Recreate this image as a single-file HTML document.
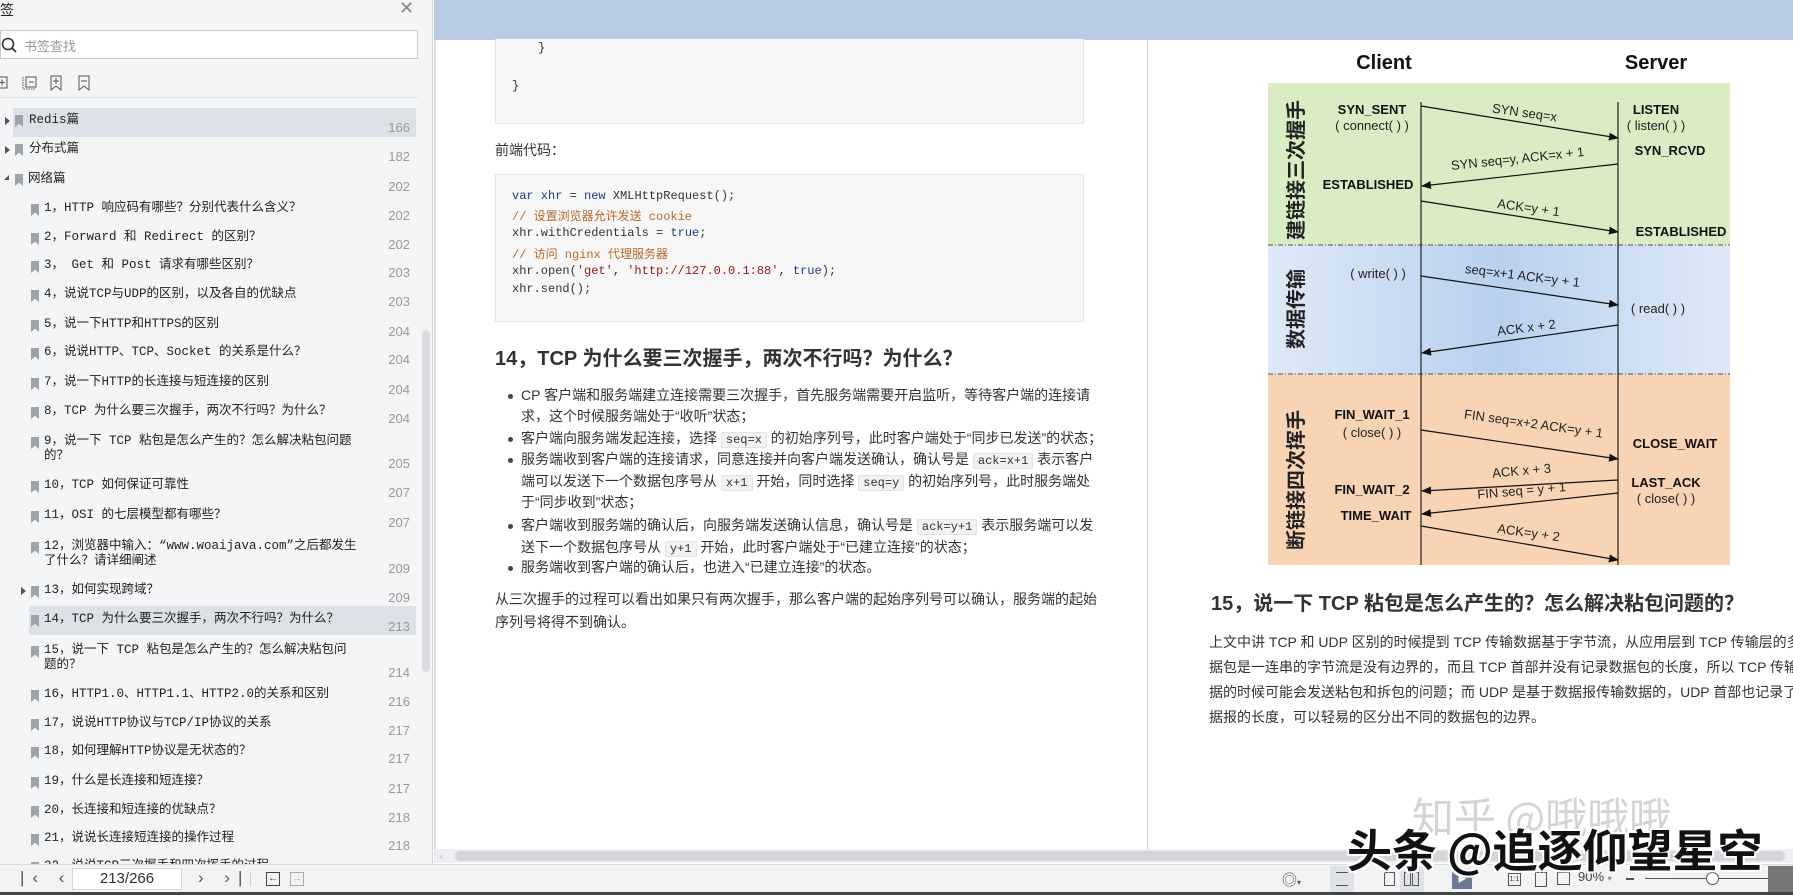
<!DOCTYPE html>
<html><head><meta charset="utf-8"><style>
*{margin:0;padding:0;box-sizing:border-box}
body{width:1793px;height:895px;overflow:hidden;position:relative;background:#fff;font-family:"Liberation Sans","Noto Sans CJK SC",sans-serif;color:#333}
.a{position:absolute;white-space:nowrap}
#side{position:absolute;left:0;top:0;width:433px;height:864px;background:#f4f5f7;border-right:1px solid #d6d8dc}
.it{position:absolute;font-family:"Liberation Mono","Noto Sans CJK SC",monospace;font-size:12.5px;color:#222;line-height:15px;white-space:nowrap}
.pg{position:absolute;left:380px;font-size:13px;color:#9a9a9a;width:30px;text-align:right}
.bm{position:absolute;width:8px;height:12px;background:#9ea3aa;clip-path:polygon(0 0,100% 0,100% 100%,50% 72%,0 100%)}
.tri{position:absolute;width:0;height:0;border-left:5px solid #555;border-top:4px solid transparent;border-bottom:4px solid transparent}
.code{position:absolute;background:#f7f7f7;border:1px solid #e6e6e6;font-family:"Liberation Mono","Noto Sans CJK SC",monospace;font-size:12px;color:#333}
.cl{position:absolute;left:16px;white-space:nowrap}
.kw{color:#1e3a8a}.cm{color:#b7692b}.st{color:#a31515}
.p{font-size:14px;color:#333;line-height:21px}
.ic{background:#f2f2f2;border:1px solid #e2e2e2;font-family:"Liberation Mono",monospace;font-size:12px;padding:0 4px;border-radius:2px}
.li{position:absolute;left:521px;font-size:14px;white-space:nowrap}
.dot{position:absolute;left:508px;width:5px;height:5px;border-radius:50%;background:#444}
</style></head><body>

<div id="side">
  <div class="a" style="left:0;top:0;font-size:14px;color:#222">签</div>
  <div class="a" style="left:399px;top:-2px;font-size:18px;color:#888">✕</div>
  <div class="a" style="left:0;top:30px;width:418px;height:29px;background:#fff;border:1px solid #c9cbd0"></div>
  <svg class="a" style="left:1px;top:37px" width="16" height="16"><circle cx="7" cy="7" r="5.5" fill="none" stroke="#333" stroke-width="1.6"/><line x1="11" y1="11" x2="15" y2="15" stroke="#333" stroke-width="1.8"/></svg>
  <div class="a" style="left:24px;top:36px;font-size:13px;color:#999">书签查找</div>
  <svg class="a" style="left:0;top:74px" width="100" height="18" fill="none" stroke="#555" stroke-width="1">
    <rect x="-4" y="3" width="11" height="11"/><line x1="-1" y1="8.5" x2="5" y2="8.5"/><line x1="2" y1="5.5" x2="2" y2="11.5"/>
    <rect x="26" y="3" width="10" height="10"/><line x1="29" y1="8" x2="34" y2="8"/><path d="M23 3v12h12" stroke-dasharray="1.5 1"/>
    <path d="M51 2h10v14l-5-4-5 4z"/><line x1="53" y1="7" x2="59" y2="7"/><line x1="56" y1="4" x2="56" y2="10"/>
    <path d="M79 2h10v14l-5-4-5 4z"/><line x1="81" y1="7" x2="87" y2="7"/>
  </svg>
  <div class="a" style="left:0;top:97px;width:418px;height:1px;background:#e0e2e6"></div>
  <div class="a" style="left:13px;top:108px;width:403px;height:29px;background:#dde0e6"></div>
  <div class="a" style="left:29px;top:606px;width:387px;height:29px;background:#dde0e6"></div>
  <div class="a" style="left:422px;top:330px;width:8px;height:342px;background:#dadce0;border-radius:4px"></div>

  <div class="tri" style="left:5px;top:117px"></div><div class="bm" style="left:15px;top:115px"></div><div class="it" style="left:29px;top:113px">Redis篇</div><div class="pg" style="top:120px">166</div>
  <div class="tri" style="left:5px;top:146px"></div><div class="bm" style="left:15px;top:144px"></div><div class="it" style="left:29px;top:142px">分布式篇</div><div class="pg" style="top:149px">182</div>
  <div class="a" style="left:4px;top:175px;width:0;height:0;border-right:5px solid #555;border-top:5px solid transparent"></div><div class="bm" style="left:15px;top:174px"></div><div class="it" style="left:28px;top:172px">网络篇</div><div class="pg" style="top:179px">202</div>

  <div class="bm" style="left:31px;top:204px"></div><div class="it" style="left:44px;top:201px">1，HTTP 响应码有哪些？分别代表什么含义？</div><div class="pg" style="top:208px">202</div>
  <div class="bm" style="left:31px;top:233px"></div><div class="it" style="left:44px;top:230px">2，Forward 和 Redirect 的区别？</div><div class="pg" style="top:237px">202</div>
  <div class="bm" style="left:31px;top:261px"></div><div class="it" style="left:44px;top:258px">3， Get 和 Post 请求有哪些区别？</div><div class="pg" style="top:265px">203</div>
  <div class="bm" style="left:31px;top:290px"></div><div class="it" style="left:44px;top:287px">4，说说TCP与UDP的区别，以及各自的优缺点</div><div class="pg" style="top:294px">203</div>
  <div class="bm" style="left:31px;top:320px"></div><div class="it" style="left:44px;top:317px">5，说一下HTTP和HTTPS的区别</div><div class="pg" style="top:324px">204</div>
  <div class="bm" style="left:31px;top:348px"></div><div class="it" style="left:44px;top:345px">6，说说HTTP、TCP、Socket 的关系是什么？</div><div class="pg" style="top:352px">204</div>
  <div class="bm" style="left:31px;top:378px"></div><div class="it" style="left:44px;top:375px">7，说一下HTTP的长连接与短连接的区别</div><div class="pg" style="top:382px">204</div>
  <div class="bm" style="left:31px;top:407px"></div><div class="it" style="left:44px;top:404px">8，TCP 为什么要三次握手，两次不行吗？为什么？</div><div class="pg" style="top:411px">204</div>
  <div class="bm" style="left:31px;top:437px"></div><div class="it" style="left:44px;top:434px">9，说一下 TCP 粘包是怎么产生的？怎么解决粘包问题<br>的？</div><div class="pg" style="top:456px">205</div>
  <div class="bm" style="left:31px;top:481px"></div><div class="it" style="left:44px;top:478px">10，TCP 如何保证可靠性</div><div class="pg" style="top:485px">207</div>
  <div class="bm" style="left:31px;top:511px"></div><div class="it" style="left:44px;top:508px">11，OSI 的七层模型都有哪些？</div><div class="pg" style="top:515px">207</div>
  <div class="bm" style="left:31px;top:542px"></div><div class="it" style="left:44px;top:539px">12，浏览器中输入：“www.woaijava.com”之后都发生<br>了什么？请详细阐述</div><div class="pg" style="top:561px">209</div>
  <div class="tri" style="left:21px;top:587px"></div><div class="bm" style="left:31px;top:586px"></div><div class="it" style="left:44px;top:583px">13，如何实现跨域？</div><div class="pg" style="top:590px">209</div>
  <div class="bm" style="left:31px;top:615px"></div><div class="it" style="left:44px;top:612px">14，TCP 为什么要三次握手，两次不行吗？为什么？</div><div class="pg" style="top:619px">213</div>
  <div class="bm" style="left:31px;top:646px"></div><div class="it" style="left:44px;top:643px">15，说一下 TCP 粘包是怎么产生的？怎么解决粘包问<br>题的？</div><div class="pg" style="top:665px">214</div>
  <div class="bm" style="left:31px;top:690px"></div><div class="it" style="left:44px;top:687px">16，HTTP1.0、HTTP1.1、HTTP2.0的关系和区别</div><div class="pg" style="top:694px">216</div>
  <div class="bm" style="left:31px;top:719px"></div><div class="it" style="left:44px;top:716px">17，说说HTTP协议与TCP/IP协议的关系</div><div class="pg" style="top:723px">217</div>
  <div class="bm" style="left:31px;top:747px"></div><div class="it" style="left:44px;top:744px">18，如何理解HTTP协议是无状态的？</div><div class="pg" style="top:751px">217</div>
  <div class="bm" style="left:31px;top:777px"></div><div class="it" style="left:44px;top:774px">19，什么是长连接和短连接？</div><div class="pg" style="top:781px">217</div>
  <div class="bm" style="left:31px;top:806px"></div><div class="it" style="left:44px;top:803px">20，长连接和短连接的优缺点？</div><div class="pg" style="top:810px">218</div>
  <div class="bm" style="left:31px;top:834px"></div><div class="it" style="left:44px;top:831px">21，说说长连接短连接的操作过程</div><div class="pg" style="top:838px">218</div>
  <div class="bm" style="left:31px;top:862px"></div><div class="it" style="left:44px;top:859px">22，说说TCP三次握手和四次挥手的过程</div>
</div>

<div class="a" style="left:434px;top:0;width:1359px;height:40px;background:#b8cce4"></div>
<div class="a" style="left:434px;top:40px;width:2px;height:810px;background:#e2e2e2"></div>
<div class="a" style="left:1147px;top:40px;width:1px;height:810px;background:#cfcfcf"></div>

<div class="code" style="left:495px;top:39px;width:589px;height:85px;border-top:none">
  <div class="cl" style="left:42px;top:2px">}</div>
  <div class="cl" style="left:16px;top:40px">}</div>
</div>
<div class="a p" style="left:495px;top:140px">前端代码：</div>
<div class="code" style="left:495px;top:174px;width:589px;height:148px">
  <div class="cl" style="top:14px"><span class="kw">var xhr</span> = <span class="kw">new</span> XMLHttpRequest();</div>
  <div class="cl" style="top:32px" ><span class="cm">// 设置浏览器允许发送 cookie</span></div>
  <div class="cl" style="top:51px">xhr.withCredentials = <span class="kw">true</span>;</div>
  <div class="cl" style="top:70px"><span class="cm">// 访问 nginx 代理服务器</span></div>
  <div class="cl" style="top:89px">xhr.open(<span class="st">'get'</span>, <span class="st">'http://127.0.0.1:88'</span>, <span class="kw">true</span>);</div>
  <div class="cl" style="top:107px">xhr.send();</div>
</div>
<div class="a" style="left:495px;top:342px;font-size:20px;font-weight:bold;color:#333">14，TCP 为什么要三次握手，两次不行吗？为什么？</div>

<div class="dot" style="top:394px"></div><div class="li" style="top:385px">CP 客户端和服务端建立连接需要三次握手，首先服务端需要开启监听，等待客户端的连接请</div>
<div class="li" style="top:406px">求，这个时候服务端处于“收听”状态；</div>
<div class="dot" style="top:437px"></div><div class="li" style="top:428px">客户端向服务端发起连接，选择 <span class="ic">seq=x</span> 的初始序列号，此时客户端处于“同步已发送”的状态；</div>
<div class="dot" style="top:458px"></div><div class="li" style="top:449px">服务端收到客户端的连接请求，同意连接并向客户端发送确认，确认号是 <span class="ic">ack=x+1</span> 表示客户</div>
<div class="li" style="top:471px">端可以发送下一个数据包序号从 <span class="ic">x+1</span> 开始，同时选择 <span class="ic">seq=y</span> 的初始序列号，此时服务端处</div>
<div class="li" style="top:492px">于“同步收到”状态；</div>
<div class="dot" style="top:524px"></div><div class="li" style="top:515px">客户端收到服务端的确认后，向服务端发送确认信息，确认号是 <span class="ic">ack=y+1</span> 表示服务端可以发</div>
<div class="li" style="top:537px">送下一个数据包序号从 <span class="ic">y+1</span> 开始，此时客户端处于“已建立连接”的状态；</div>
<div class="dot" style="top:566px"></div><div class="li" style="top:557px">服务端收到客户端的确认后，也进入“已建立连接”的状态。</div>
<div class="a p" style="left:495px;top:589px">从三次握手的过程可以看出如果只有两次握手，那么客户端的起始序列号可以确认，服务端的起始</div>
<div class="a p" style="left:495px;top:612px">序列号将得不到确认。</div>

<svg class="a" style="left:0;top:0" width="1793" height="895" font-family="Liberation Sans, sans-serif">
  <defs>
    <marker id="ar" markerWidth="10" markerHeight="8" refX="9" refY="4" orient="auto" markerUnits="userSpaceOnUse"><path d="M0 0L10 4L0 8z" fill="#111"/></marker>
    <linearGradient id="gb" x1="0" x2="1"><stop offset="0" stop-color="#dfe9f7"/><stop offset=".5" stop-color="#b9d0ef"/><stop offset="1" stop-color="#dfe9f7"/></linearGradient>
  </defs>
  <rect x="1268" y="83" width="462" height="162" fill="#d9ecc4"/>
  <rect x="1268" y="245" width="462" height="129" fill="url(#gb)"/>
  <rect x="1268" y="374" width="462" height="191" fill="#f9d4b4"/>
  <line x1="1268" y1="245" x2="1730" y2="245" stroke="#555" stroke-dasharray="5 2 1 2"/>
  <line x1="1268" y1="374" x2="1730" y2="374" stroke="#555" stroke-dasharray="5 2 1 2"/>
  <line x1="1421" y1="102" x2="1421" y2="565" stroke="#222" stroke-width="1.2"/>
  <line x1="1618" y1="102" x2="1618" y2="565" stroke="#222" stroke-width="1.2"/>
  <g font-weight="bold" font-size="20" text-anchor="middle" fill="#111"><text x="1384" y="69">Client</text><text x="1656" y="69">Server</text></g>
  <g font-family="Noto Sans CJK SC, sans-serif" font-weight="bold" font-size="20" fill="#222" text-anchor="middle">
    <text transform="translate(1303,170) rotate(-90)">建链接三次握手</text>
    <text transform="translate(1303,309) rotate(-90)">数据传输</text>
    <text transform="translate(1303,480) rotate(-90)">断链接四次挥手</text>
  </g>
  <g font-weight="bold" font-size="13" fill="#111" text-anchor="middle">
    <text x="1372" y="114">SYN_SENT</text><text x="1656" y="114">LISTEN</text>
    <text x="1670" y="155">SYN_RCVD</text><text x="1368" y="189">ESTABLISHED</text>
    <text x="1681" y="236">ESTABLISHED</text>
    <text x="1372" y="419">FIN_WAIT_1</text><text x="1675" y="448">CLOSE_WAIT</text>
    <text x="1372" y="494">FIN_WAIT_2</text><text x="1666" y="487">LAST_ACK</text>
    <text x="1376" y="520">TIME_WAIT</text>
  </g>
  <g font-size="13" fill="#222" text-anchor="middle">
    <text x="1372" y="130">( connect( ) )</text><text x="1656" y="130">( listen( ) )</text>
    <text x="1378" y="278">( write( ) )</text><text x="1658" y="313">( read( ) )</text>
    <text x="1372" y="437">( close( ) )</text><text x="1666" y="503">( close( ) )</text>
  </g>
  <g stroke="#111" stroke-width="1.2" marker-end="url(#ar)">
    <line x1="1421" y1="106" x2="1618" y2="138"/>
    <line x1="1618" y1="164" x2="1422" y2="186"/>
    <line x1="1421" y1="201" x2="1618" y2="232"/>
    <line x1="1421" y1="276" x2="1618" y2="305"/>
    <line x1="1618" y1="325" x2="1422" y2="353"/>
    <line x1="1421" y1="430" x2="1618" y2="459"/>
    <line x1="1618" y1="480" x2="1422" y2="491"/>
    <line x1="1618" y1="493" x2="1422" y2="514"/>
    <line x1="1421" y1="526" x2="1618" y2="560"/>
  </g>
  <g font-size="13" fill="#222" text-anchor="middle">
    <text transform="translate(1524,117) rotate(8)">SYN seq=x</text>
    <text transform="translate(1518,163) rotate(-6)">SYN seq=y, ACK=x + 1</text>
    <text transform="translate(1528,212) rotate(8)">ACK=y + 1</text>
    <text transform="translate(1522,280) rotate(7)">seq=x+1 ACK=y + 1</text>
    <text transform="translate(1527,332) rotate(-7)">ACK x + 2</text>
    <text transform="translate(1533,428) rotate(8)">FIN seq=x+2 ACK=y + 1</text>
    <text transform="translate(1522,475) rotate(-5)">ACK x + 3</text>
    <text transform="translate(1522,495) rotate(-5)">FIN seq = y + 1</text>
    <text transform="translate(1528,537) rotate(8)">ACK=y + 2</text>
  </g>
</svg>

<div class="a" style="left:1211px;top:587px;font-size:20px;font-weight:bold;color:#333">15，说一下 TCP 粘包是怎么产生的？怎么解决粘包问题的？</div>
<div class="a p" style="left:1209px;top:632px">上文中讲 TCP 和 UDP 区别的时候提到 TCP 传输数据基于字节流，从应用层到 TCP 传输层的多个数</div>
<div class="a p" style="left:1209px;top:657px">据包是一连串的字节流是没有边界的，而且 TCP 首部并没有记录数据包的长度，所以 TCP 传输数</div>
<div class="a p" style="left:1209px;top:682px">据的时候可能会发送粘包和拆包的问题；而 UDP 是基于数据报传输数据的，UDP 首部也记录了数</div>
<div class="a p" style="left:1209px;top:707px">据报的长度，可以轻易的区分出不同的数据包的边界。</div>

<div class="a" style="left:434px;top:849px;width:1359px;height:14px;background:#eceef1"></div>
<div class="a" style="left:440px;top:852px;width:6px;height:8px;color:#999;font-size:8px">‹</div>
<div class="a" style="left:455px;top:851px;width:1330px;height:10px;background:#d3d5da;border-radius:5px"></div>

<div class="a" style="left:1412px;top:785px;font-family:'Noto Sans CJK SC',sans-serif;font-size:42px;color:#d4d4d4;text-shadow:1px 1px 0 #fff">知乎 @哦哦哦</div>
<div class="a" style="left:1347px;top:815px;font-family:'Noto Sans CJK SC',sans-serif;font-size:45px;color:#111;font-weight:bold;text-shadow:-2px -2px 0 #fff,2px 2px 0 #fff,2px -2px 0 #fff,-2px 2px 0 #fff;z-index:5">头条 @追逐仰望星空</div>

<div class="a" style="left:0;top:864px;width:1793px;height:31px;background:#f2f3f5;border-top:1px solid #d9dbdf;z-index:3"></div>
<div class="a" style="left:0;top:892px;width:1793px;height:3px;background:#444;z-index:4"></div>
<div class="a" style="z-index:4;left:20px;top:868px;font-size:17px;color:#555;letter-spacing:8px">|‹ ‹</div>
<div class="a" style="z-index:4;left:72px;top:868px;width:110px;height:22px;background:#fff;border:1px solid #d6d6d6;font-size:15px;color:#333;text-align:center;line-height:20px">213/266</div>
<div class="a" style="z-index:4;left:198px;top:868px;font-size:17px;color:#555;letter-spacing:8px">› ›|</div>
<div class="a" style="z-index:4;left:250px;top:872px;width:1px;height:14px;background:#ccc"></div>
<div class="a" style="z-index:4;left:266px;top:872px;width:14px;height:14px;border:1px solid #444;font-size:10px;line-height:12px;text-align:center">←</div>
<div class="a" style="z-index:4;left:290px;top:872px;width:14px;height:14px;border:1px solid #aaa;color:#aaa;font-size:10px;line-height:12px;text-align:center">→</div>
<div class="a" style="z-index:4;left:1282px;top:869px;font-size:15px;color:#555">◎<span style="font-size:8px">▾</span></div>
<div class="a" style="z-index:4;left:1330px;top:866px;width:24px;height:26px;background:#dfe2e8"></div>
<div class="a" style="z-index:4;left:1336px;top:872px;width:12px;height:14px;border-top:1px solid #555;border-bottom:1px solid #555"></div>
<div class="a" style="z-index:4;left:1384px;top:872px;width:11px;height:14px;border:1px solid #555"></div>
<div class="a" style="z-index:4;left:1400px;top:866px;width:24px;height:26px;background:#dfe2e8"></div>
<div class="a" style="z-index:4;left:1404px;top:872px;width:7px;height:14px;border:1px solid #555"></div>
<div class="a" style="z-index:4;left:1412px;top:872px;width:7px;height:14px;border:1px solid #555"></div>
<div class="a" style="z-index:4;left:1452px;top:869px;width:20px;height:20px;background:#6b7a94;color:#fff;font-size:9px;text-align:center;line-height:20px">▶</div>
<div class="a" style="z-index:4;left:1508px;top:873px;width:13px;height:13px;border:1px solid #555;font-size:7px;text-align:center;line-height:11px">1:1</div>
<div class="a" style="z-index:4;left:1535px;top:872px;width:12px;height:15px;border:1px solid #555"></div>
<div class="a" style="z-index:4;left:1557px;top:872px;width:13px;height:13px;border:1px solid #555"></div>
<div class="a" style="z-index:4;left:1578px;top:869px;font-size:13px;color:#444">90% <span style="font-size:8px;color:#888">▾</span></div>
<div class="a" style="z-index:4;left:1626px;top:878px;width:8px;height:2px;background:#555"></div>
<div class="a" style="z-index:4;left:1645px;top:878px;width:148px;height:1px;background:#555"></div>
<div class="a" style="z-index:4;left:1706px;top:872px;width:13px;height:13px;border:1px solid #555;border-radius:50%;background:#fff"></div>
<div class="a" style="z-index:4;left:1768px;top:866px;width:25px;height:26px;background:#777"></div>
</body></html>
